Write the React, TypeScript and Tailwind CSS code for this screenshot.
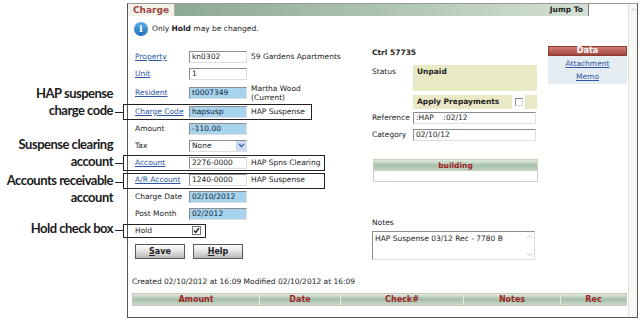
import React from 'react';

const base = "font-['DejaVu_Sans',Verdana,sans-serif] text-[7.5px] leading-none text-[#222]";

function Link({ children }: { children: React.ReactNode }) {
  return <span className="text-[#2b57a3] underline">{children}</span>;
}

function Input({ value, blue = false, w = 'w-[58px]' }: { value: string; blue?: boolean; w?: string }) {
  return (
    <div
      className={`${w} h-[12px] shrink-0 flex items-center px-[2px] whitespace-pre border border-[#8c8c8c] border-r-[#dedede] border-b-[#dedede] ${
        blue ? 'bg-[#a7d3ec] text-[#10233a]' : 'bg-white'
      }`}
    >
      {value}
    </div>
  );
}

function Row({ label, children, tall = false }: { label: React.ReactNode; children: React.ReactNode; tall?: boolean }) {
  return (
    <div className={`flex items-center ${tall ? 'h-[21px]' : 'h-[17px]'}`}>
      <div className="w-[54px] shrink-0">{label}</div>
      {children}
    </div>
  );
}

function Note({ text }: { text: React.ReactNode }) {
  return <div className="ml-[4px] whitespace-nowrap leading-[9px]">{text}</div>;
}

function Button({ first, rest }: { first: string; rest: string }) {
  return (
    <div className="w-[50px] h-[15px] flex items-center justify-center border border-[#5a5a5a] bg-gradient-to-b from-[#ffffff] via-[#e2e2e2] to-[#b9b9b9] font-bold text-[8px] text-[#222]">
      <span className="underline">{first}</span>
      {rest}
    </div>
  );
}

function Callout({ top, lines }: { top: number; lines: { text: string; dash?: boolean }[] }) {
  return (
    <div className="absolute left-0 w-[123px] text-right font-['Lato',sans-serif] font-bold text-[13px] leading-[17px] tracking-[-0.5px] text-[#1b1b1b]" style={{ top }}>
      {lines.map((l, i) => (
        <div key={i} className={`flex items-center justify-end ${l.dash ? '' : 'pr-[10px]'}`}>
          <span>{l.text}</span>
          {l.dash && <span className="inline-block ml-[2px] mt-[3px] w-[8px] h-px bg-[#222]" />}
        </div>
      ))}
    </div>
  );
}

export default function App() {
  return (
    <div className={`relative w-[642px] h-[320px] bg-white overflow-hidden ${base}`}>
      <div className="ml-[127px] mt-[3px] w-[511px] h-[315px] border border-[#555] border-t-[#9a9a9a] flex">
        {/* main */}
        <div className="w-[500px] flex flex-col">
          {/* title bar */}
          <div className="h-[12px] flex items-stretch bg-gradient-to-r from-[#86a38c] via-[#adc3b1] to-[#dde7dd]">
            <div className="w-[47px] bg-[#f2f1e9] border-r border-[#b8b8a8] flex items-center justify-center font-bold text-[9px] text-[#a14444]">
              Charge
            </div>
            <div className="flex-1" />
            <div className="flex items-center font-bold pr-[5px]">Jump To</div>
            <div className="w-[40px] bg-white border-l border-[#777]" />
          </div>

          {/* info */}
          <div className="flex items-center h-[14px] mt-[6px] pl-[6px]">
            <div className="w-[14px] h-[14px] rounded-full bg-gradient-to-b from-[#5aaee8] to-[#1f6fb8] flex items-center justify-center text-white font-['DejaVu_Serif',serif] font-bold text-[10px]">
              i
            </div>
            <div className="ml-[4px]">
              Only <b>Hold</b> may be changed.
            </div>
          </div>

          {/* columns */}
          <div className="h-[240px] flex">
            {/* left form */}
            <div className="w-[237px] ml-[7px] pt-[12px] flex flex-col">
              <Row label={<Link>Property</Link>}>
                <Input value="kn0302" />
                <Note text="59 Gardens Apartments" />
              </Row>
              <Row label={<Link>Unit</Link>}>
                <Input value="1" />
              </Row>
              <Row label={<Link>Resident</Link>} tall>
                <Input value="t0007349" blue />
                <Note
                  text={
                    <>
                      Martha Wood
                      <br />
                      (Current)
                    </>
                  }
                />
              </Row>
              <Row label={<Link>Charge Code</Link>}>
                <Input value="hapsusp" blue />
                <Note text="HAP Suspense" />
              </Row>
              <Row label="Amount">
                <Input value="-110.00" blue />
              </Row>
              <Row label="Tax">
                <div className="w-[58px] h-[12px] flex items-center justify-between pl-[2px] bg-white border border-[#8c8c8c] border-r-[#dedede] border-b-[#dedede]">
                  None
                  <div className="w-[10px] h-[10px] bg-[#cddbf2] flex items-center justify-center">
                    <svg width="7" height="5" viewBox="0 0 7 5">
                      <path d="M1 1 L3.5 3.5 L6 1" fill="none" stroke="#3a5ea8" strokeWidth="1.3" />
                    </svg>
                  </div>
                </div>
              </Row>
              <Row label={<Link>Account</Link>}>
                <Input value="2276-0000" />
                <Note text="HAP Spns Clearing" />
              </Row>
              <Row label={<Link>A/R Account</Link>}>
                <Input value="1240-0000" />
                <Note text="HAP Suspense" />
              </Row>
              <Row label="Charge Date">
                <Input value="02/10/2012" blue />
              </Row>
              <Row label="Post Month">
                <Input value="02/2012" blue />
              </Row>
              <Row label="Hold">
                <div className="ml-[3px] w-[9px] h-[9px] bg-white border border-[#777] flex items-center justify-center">
                  <svg width="7" height="7" viewBox="0 0 7 7">
                    <path d="M1 3.5 L2.8 5.5 L6 1" fill="none" stroke="#222" strokeWidth="1.3" />
                  </svg>
                </div>
              </Row>
              <div className="flex gap-[8px] mt-[5px]">
                <Button first="S" rest="ave" />
                <Button first="H" rest="elp" />
              </div>
            </div>

            {/* right details */}
            <div className="w-[166px] pt-[10px] flex flex-col">
              <div className="h-[14px] flex items-center font-bold">Ctrl 57735</div>
              <div className="flex mt-[5px]">
                <div className="w-[41px] pt-[3px]">Status</div>
                <div className="w-[124px] h-[26px] bg-[#e9e9c6] px-[4px] pt-[3px] font-bold">Unpaid</div>
              </div>
              <div className="flex items-center mt-[4px] pl-[41px]">
                <div className="w-[99px] h-[14px] bg-[#e9e9c6] flex items-center pl-[4px] font-bold">Apply Prepayments</div>
                <div className="ml-[3px] w-[8px] h-[8px] bg-white border border-[#8a8a8a] border-r-[#d8d8d8] border-b-[#d8d8d8]" />
                <div className="ml-[2px] w-[12px] h-[14px] bg-[#e9e9c6]" />
              </div>
              <div className="flex items-center mt-[3px]">
                <div className="w-[41px]">Reference</div>
                <Input value=":HAP    :02/12" w="w-[123px]" />
              </div>
              <div className="flex items-center mt-[5px]">
                <div className="w-[41px]">Category</div>
                <Input value="02/10/12" w="w-[123px]" />
              </div>
              <div className="mt-[18px] ml-[1px] w-[165px] border border-[#cfcfbf]">
                <div className="h-[11px] bg-gradient-to-b from-[#dfe9df] via-[#a7c0ac] to-[#c5d6c7] flex items-center justify-center font-bold text-[#9c2626]">
                  building
                </div>
                <div className="h-[10px] bg-white" />
              </div>
              <div className="mt-[36px] h-[10px] flex items-center">Notes</div>
              <div className="mt-[3px] w-[163px] h-[29px] bg-white border border-[#8c8c8c] border-r-[#dedede] border-b-[#dedede] flex">
                <div className="flex-1 px-[2px] pt-[3px]">HAP Suspense 03/12 Rec - 7780 B</div>
                <div className="w-[9px] flex flex-col justify-between py-[2px] items-center">
                  <svg width="7" height="5" viewBox="0 0 7 5">
                    <path d="M1 4 L3.5 1.5 L6 4" fill="none" stroke="#c8c8c8" strokeWidth="1" />
                  </svg>
                  <svg width="7" height="5" viewBox="0 0 7 5">
                    <path d="M1 1 L3.5 3.5 L6 1" fill="none" stroke="#c8c8c8" strokeWidth="1" />
                  </svg>
                </div>
              </div>
            </div>

            {/* data sidebar */}
            <div className="w-[79px] ml-[10px] pt-[10px]">
              <div className="h-[10px] bg-gradient-to-b from-[#cf8077] to-[#a4453e] border border-[#8a3a34] flex items-center justify-center font-bold text-white text-[8px]">
                Data
              </div>
              <div className="bg-[#e5ecf2] pt-[1px] pb-[1px] flex flex-col items-center">
                <div className="h-[13px] flex items-center">
                  <Link>Attachment</Link>
                </div>
                <div className="h-[13px] flex items-center">
                  <Link>Memo</Link>
                </div>
              </div>
            </div>
          </div>

          {/* footer */}
          <div className="pl-[4px]">
            <div className="h-[12px] flex items-center">Created 02/10/2012 at 16:09 Modified 02/10/2012 at 16:09</div>
            <div className="mt-[5px] w-[495px] h-[13px] flex border border-[#c9c9b9] bg-gradient-to-b from-[#e0eae0] via-[#a6bfab] to-[#c9d9cb] font-bold text-[8px] text-[#9c2626]">
              <div className="w-[127px] flex items-center justify-center border-r border-[#e6ede6]">Amount</div>
              <div className="w-[81px] flex items-center justify-center border-r border-[#e6ede6]">Date</div>
              <div className="w-[123px] flex items-center justify-center border-r border-[#e6ede6]">Check#</div>
              <div className="w-[97px] flex items-center justify-center border-r border-[#e6ede6]">Notes</div>
              <div className="flex-1 flex items-center justify-center">Rec</div>
            </div>
          </div>
        </div>

        {/* scrollbar */}
        <div className="w-[9px] bg-[#f7f7f3] border-l border-[#e2e2da] flex flex-col items-center pt-[3px]">
          <svg width="7" height="5" viewBox="0 0 7 5">
            <path d="M1 4 L3.5 1.5 L6 4" fill="none" stroke="#c4c4c4" strokeWidth="1" />
          </svg>
        </div>
      </div>

      {/* annotations */}
      <Callout top={85} lines={[{ text: 'HAP suspense' }, { text: 'charge code', dash: true }]} />
      <Callout top={136} lines={[{ text: 'Suspense clearing' }, { text: 'account', dash: true }]} />
      <Callout top={172} lines={[{ text: 'Accounts receivable', dash: true }, { text: 'account' }]} />
      <Callout top={220} lines={[{ text: 'Hold check box', dash: true }]} />

      <div className="absolute left-[123px] top-[104px] w-[189px] h-[16px] border border-[#222]" />
      <div className="absolute left-[123px] top-[155px] w-[202px] h-[16px] border border-[#222]" />
      <div className="absolute left-[123px] top-[173px] w-[202px] h-[16px] border border-[#222]" />
      <div className="absolute left-[123px] top-[224px] w-[83px] h-[14px] border border-[#222]" />
    </div>
  );
}
